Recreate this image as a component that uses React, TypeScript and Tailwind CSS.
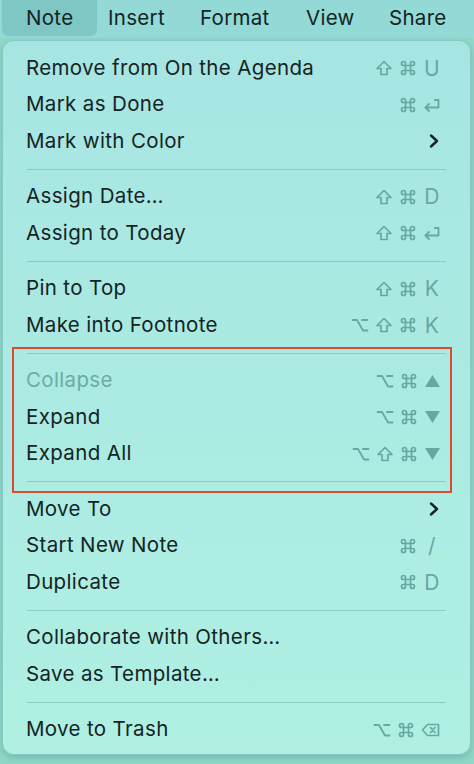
import React from "react"

type Item =
  | { kind: "sep" }
  | { kind: "item"; label: string; keys?: string[]; sub?: boolean; disabled?: boolean }

const FONT = { fontFamily: "Inter, 'Noto Sans', sans-serif" }

function Shift() {
  return (
    <svg width="18" height="18" viewBox="0 0 18 18" fill="none" stroke="currentColor" strokeWidth="1.7" strokeLinejoin="round">
      <path d="M9 2.5 L16 9.5 H12 V15.5 H6 V9.5 H2 Z" />
    </svg>
  )
}

function Option() {
  return (
    <svg width="18" height="18" viewBox="0 0 18 18" fill="none" stroke="currentColor" strokeWidth="1.8" strokeLinecap="round" strokeLinejoin="round">
      <path d="M1.5 4 H6 L12 14.5 H16.5" />
      <path d="M11 4 H16.5" />
    </svg>
  )
}

function Cmd() {
  return (
    <svg width="18" height="18" viewBox="0 0 18 18" fill="none" stroke="currentColor" strokeWidth="1.7">
      <path d="M6.5 6.5 H11.5 V11.5 H6.5 Z" />
      <path d="M6.5 6.5 V4.5 A2 2 0 1 0 4.5 6.5 H6.5" />
      <path d="M11.5 6.5 V4.5 A2 2 0 1 1 13.5 6.5 H11.5" />
      <path d="M6.5 11.5 V13.5 A2 2 0 1 1 4.5 11.5 H6.5" />
      <path d="M11.5 11.5 V13.5 A2 2 0 1 0 13.5 11.5 H11.5" />
    </svg>
  )
}

function Return() {
  return (
    <svg width="18" height="18" viewBox="0 0 18 18" fill="none" stroke="currentColor" strokeWidth="1.8" strokeLinecap="round" strokeLinejoin="round">
      <path d="M12 4 H15.5 V11.5 H2.5" />
      <path d="M6 8 L2.5 11.5 L6 15" />
    </svg>
  )
}

function Delete() {
  return (
    <svg width="20" height="18" viewBox="0 0 20 18" fill="none" stroke="currentColor" strokeWidth="1.7" strokeLinejoin="round" strokeLinecap="round">
      <path d="M6.5 3.5 H17.5 V14.5 H6.5 L1.5 9 Z" />
      <path d="M9.5 6.5 L14 11.5 M14 6.5 L9.5 11.5" />
    </svg>
  )
}

function Tri({ up }: { up?: boolean }) {
  return (
    <svg width="17" height="16" viewBox="0 0 17 16" fill="currentColor">
      {up ? <path d="M8.5 2 L16 14 H1 Z" /> : <path d="M1 2 H16 L8.5 14 Z" />}
    </svg>
  )
}

function Key({ k }: { k: string }) {
  if (k === "shift") return <Shift />
  if (k === "opt") return <Option />
  if (k === "cmd") return <Cmd />
  if (k === "ret") return <Return />
  if (k === "del") return <Delete />
  if (k === "up") return <Tri up />
  if (k === "down") return <Tri />
  return <span className="w-[18px] text-center text-[21px] leading-none">{k}</span>
}

const items: Item[] = [
  { kind: "item", label: "Remove from On the Agenda", keys: ["shift", "cmd", "U"] },
  { kind: "item", label: "Mark as Done", keys: ["cmd", "ret"] },
  { kind: "item", label: "Mark with Color", sub: true },
  { kind: "sep" },
  { kind: "item", label: "Assign Date…", keys: ["shift", "cmd", "D"] },
  { kind: "item", label: "Assign to Today", keys: ["shift", "cmd", "ret"] },
  { kind: "sep" },
  { kind: "item", label: "Pin to Top", keys: ["shift", "cmd", "K"] },
  { kind: "item", label: "Make into Footnote", keys: ["opt", "shift", "cmd", "K"] },
  { kind: "sep" },
  { kind: "item", label: "Collapse", keys: ["opt", "cmd", "up"], disabled: true },
  { kind: "item", label: "Expand", keys: ["opt", "cmd", "down"] },
  { kind: "item", label: "Expand All", keys: ["opt", "shift", "cmd", "down"] },
  { kind: "sep" },
  { kind: "item", label: "Move To", sub: true },
  { kind: "item", label: "Start New Note", keys: ["cmd", "/"] },
  { kind: "item", label: "Duplicate", keys: ["cmd", "D"] },
  { kind: "sep" },
  { kind: "item", label: "Collaborate with Others…" },
  { kind: "item", label: "Save as Template…" },
  { kind: "sep" },
  { kind: "item", label: "Move to Trash", keys: ["opt", "cmd", "del"] },
]

export default function App() {
  return (
    <div className="relative w-[474px] h-[764px] overflow-hidden bg-[#8fd8c8] text-[#142424]" style={FONT}>
      {/* menu bar */}
      <div className="flex h-[38px] items-start bg-[#93d9d6] text-[20.5px] tracking-[0.3px] pl-[2px]">
        <div className="flex h-[36px] w-[95px] items-center rounded-b-[6px] bg-[#7fc7c5] pl-[24px]">Note</div>
        <div className="flex h-[36px] w-[103px] items-center pl-[11px]">Insert</div>
        <div className="flex h-[36px] w-[106px] items-center">Format</div>
        <div className="flex h-[36px] w-[83px] items-center">View</div>
        <div className="flex h-[36px] items-center">Share</div>
      </div>

      <div className="h-[2px]" />

      {/* menu */}
      <div className="ml-[2px] mr-[3px] rounded-[12px] border border-[#86c9c6] bg-gradient-to-b from-[#a7e5e3] to-[#b0f0e2] pt-[9px] pb-[6px] shadow-[0_3px_6px_rgba(40,110,100,0.25)]">
        {items.map((it, i) =>
          it.kind === "sep" ? (
            <div key={i} className="flex h-[19px] items-center px-[24px]">
              <div className="h-px w-full bg-[#8ccbc6]" />
            </div>
          ) : (
            <div key={i} className="flex h-[36.5px] items-center pl-[23px] pr-[29px] text-[20.5px] tracking-[0.35px]">
              <span className={it.disabled ? "text-[#6eaaa5]" : ""}>{it.label}</span>
              <div className="ml-auto flex items-center gap-[6px] text-[#68a7a2]">
                {it.sub && (
                  <svg width="12" height="16" viewBox="0 0 12 16" fill="none" stroke="#142424" strokeWidth="2.4" strokeLinecap="round" strokeLinejoin="round" className="mr-[1px]">
                    <path d="M3 2.5 L9 8 L3 13.5" />
                  </svg>
                )}
                {it.keys?.map((k, j) => <Key key={j} k={k} />)}
              </div>
            </div>
          )
        )}
      </div>

      {/* annotation box */}
      <div className="absolute left-[12px] top-[347px] h-[146px] w-[440px] border-2 border-[#dd4a30]" />
    </div>
  )
}
